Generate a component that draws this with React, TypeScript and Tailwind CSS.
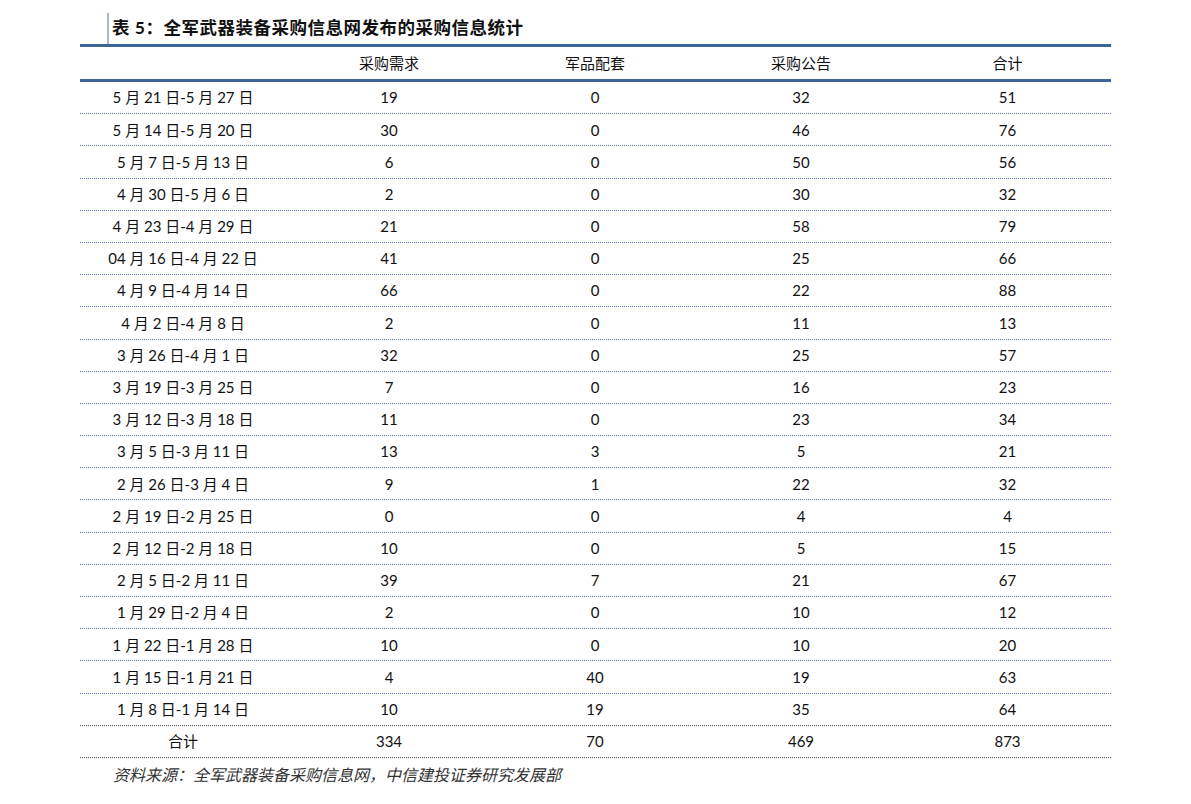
import React from 'react';

const ROWS: [string, number, number, number, number][] = [
  ['5 月 21 日-5 月 27 日', 19, 0, 32, 51],
  ['5 月 14 日-5 月 20 日', 30, 0, 46, 76],
  ['5 月 7 日-5 月 13 日', 6, 0, 50, 56],
  ['4 月 30 日-5 月 6 日', 2, 0, 30, 32],
  ['4 月 23 日-4 月 29 日', 21, 0, 58, 79],
  ['04 月 16 日-4 月 22 日', 41, 0, 25, 66],
  ['4 月 9 日-4 月 14 日', 66, 0, 22, 88],
  ['4 月 2 日-4 月 8 日', 2, 0, 11, 13],
  ['3 月 26 日-4 月 1 日', 32, 0, 25, 57],
  ['3 月 19 日-3 月 25 日', 7, 0, 16, 23],
  ['3 月 12 日-3 月 18 日', 11, 0, 23, 34],
  ['3 月 5 日-3 月 11 日', 13, 3, 5, 21],
  ['2 月 26 日-3 月 4 日', 9, 1, 22, 32],
  ['2 月 19 日-2 月 25 日', 0, 0, 4, 4],
  ['2 月 12 日-2 月 18 日', 10, 0, 5, 15],
  ['2 月 5 日-2 月 11 日', 39, 7, 21, 67],
  ['1 月 29 日-2 月 4 日', 2, 0, 10, 12],
  ['1 月 22 日-1 月 28 日', 10, 0, 10, 20],
  ['1 月 15 日-1 月 21 日', 4, 40, 19, 63],
  ['1 月 8 日-1 月 14 日', 10, 19, 35, 64],
];

const font = 'font-["Lato","Noto_Sans_CJK_SC",sans-serif]';

export default function App() {
  return (
    <div className={`w-[1191px] h-[804px] bg-white text-[#111] ${font}`}>
      <div className="pl-[80px] pt-[13px] w-[1111px]">
        {/* title */}
        <div className="flex items-stretch h-[31px]">
          <div className="w-[29px] flex justify-end">
            <div className="w-[2px] bg-[#a7b9d1]" />
          </div>
          <h1 className="pl-[3px] pt-[3px] text-[17.5px] font-bold leading-[24px] tracking-[0.5px]">
            表 5：全军武器装备采购信息网发布的采购信息统计
          </h1>
        </div>

        {/* table */}
        <div className="border-t-[3px] border-[#3e6597]">
          <div className="grid grid-cols-[206px_206px_206px_206px_207px] h-[35px] items-center text-[15px] border-b-[3px] border-[#3e6597]">
            <div />
            <div className="text-center">采购需求</div>
            <div className="text-center">军品配套</div>
            <div className="text-center">采购公告</div>
            <div className="text-center">合计</div>
          </div>
          {ROWS.map((r, i) => (
            <div
              key={i}
              className={`grid grid-cols-[206px_206px_206px_206px_207px] h-[32.2px] items-center text-[15px] border-b border-dotted ${
                i === ROWS.length - 1 ? 'border-[#555]' : 'border-[#5d7fb0]'
              }`}
            >
              <div className="text-center">{r[0]}</div>
              <div className="text-center">{r[1]}</div>
              <div className="text-center">{r[2]}</div>
              <div className="text-center">{r[3]}</div>
              <div className="text-center">{r[4]}</div>
            </div>
          ))}
          <div className="grid grid-cols-[206px_206px_206px_206px_207px] h-[32.2px] items-center text-[15px] border-b border-dotted border-[#555]">
            <div className="text-center">合计</div>
            <div className="text-center">334</div>
            <div className="text-center">70</div>
            <div className="text-center">469</div>
            <div className="text-center">873</div>
          </div>
        </div>

        <p className="pl-[33px] pt-[5px] text-[16px] italic text-[#333] leading-[24px]">
          资料来源：全军武器装备采购信息网，中信建投证券研究发展部
        </p>
      </div>
    </div>
  );
}
